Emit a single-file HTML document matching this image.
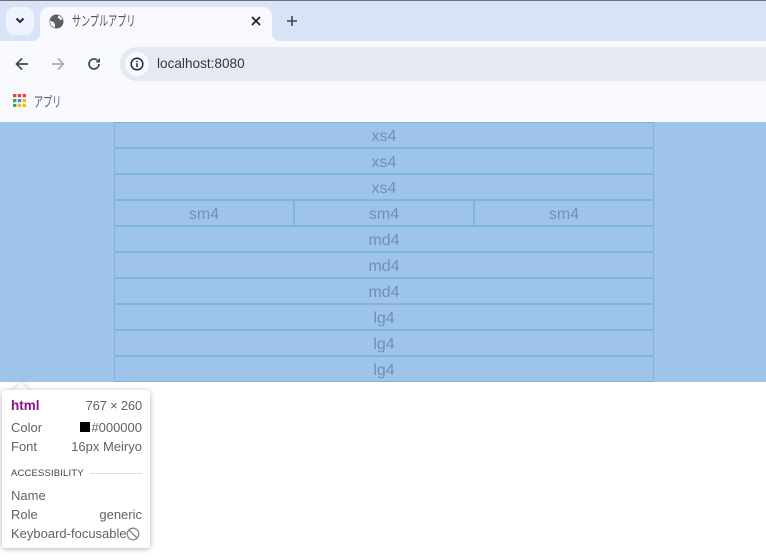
<!DOCTYPE html>
<html><head><meta charset="utf-8"><style>
*{box-sizing:border-box}
html,body{margin:0;padding:0;width:766px;height:560px;overflow:hidden;background:#fff;font-family:"Liberation Sans","Noto Sans CJK JP",sans-serif}
.a{position:absolute}
#top{left:0;top:0;width:766px;height:1px;background:#6f6f6f}
#tabs{left:0;top:1px;width:766px;height:40px;background:#d8e3f7}
#bar{left:0;top:41px;width:766px;height:81px;background:#f8f9ff}
#page{left:0;top:122px;width:766px;height:260px;background:#9fc4e9}
.c{position:absolute;border:1px solid #7fb3e0;height:26px;text-align:center;font-size:16px;line-height:27px;color:#6e8fb8;background:#9fc4e9}
#tip{left:2px;top:390px;width:148px;height:158px;background:#fff;border-radius:3px;box-shadow:0 1px 6px rgba(0,0,0,.3)}
.t{position:absolute;font-size:13px;line-height:16px;color:#626262;white-space:nowrap}
.r{right:8px}.l{left:9px}
.jp{font-size:14px;line-height:16px;white-space:nowrap;transform:scaleX(.65);transform-origin:0 0}
</style></head><body>
<div class="a" id="top"></div>
<div class="a" id="tabs"></div>
<div class="a" id="bar"></div>
<div class="a" style="left:6px;top:7px;width:28px;height:28px;border-radius:9px;background:#eef3fd"></div>
<svg class="a" style="left:15px;top:17px" width="10" height="8" viewBox="0 0 10 8"><path d="M1.5 1.5L5 5L8.5 1.5" fill="none" stroke="#202a3a" stroke-width="2"/></svg>
<div class="a" style="left:40px;top:7px;width:232px;height:34px;background:#f8f9ff;border-radius:9px 9px 0 0"></div>
<svg class="a" style="left:32px;top:33px" width="8" height="8"><path d="M8 0V8H0A8 8 0 0 0 8 0Z" fill="#f8f9ff"/></svg>
<svg class="a" style="left:272px;top:33px" width="8" height="8"><path d="M0 0V8H8A8 8 0 0 1 0 0Z" fill="#f8f9ff"/></svg>
<svg class="a" style="left:49px;top:14px" width="15" height="15" viewBox="0 0 15 15"><circle cx="7.5" cy="7.5" r="7" fill="#5a5f66"/><path d="M1.2 6.5L5 8.5L6 10.5L6 13.6A6.3 6.3 0 0 1 1.2 6.5ZM9.5 1.5A6.3 6.3 0 0 1 13.6 5.5L11 6L10.5 4.5L8.5 4Z" fill="#f8f9ff"/></svg>
<div class="a jp" style="left:72px;top:13px;color:#50545a">サンプルアプリ</div>
<svg class="a" style="left:251px;top:16px" width="10" height="10" viewBox="0 0 10 10"><path d="M1 1L9 9M9 1L1 9" stroke="#20242a" stroke-width="1.8"/></svg>
<svg class="a" style="left:286px;top:15px" width="12" height="12" viewBox="0 0 12 12"><path d="M6 1V11M1 6H11" stroke="#3c4654" stroke-width="1.6"/></svg>

<svg class="a" style="left:15px;top:57px" width="14" height="14" viewBox="0 0 14 14"><path d="M13 7H2M7 1.5L1.5 7L7 12.5" fill="none" stroke="#3c4654" stroke-width="1.7"/></svg>
<svg class="a" style="left:51px;top:57px" width="14" height="14" viewBox="0 0 14 14"><path d="M1 7H12M7 1.5L12.5 7L7 12.5" fill="none" stroke="#a9adb4" stroke-width="1.7"/></svg>
<svg class="a" style="left:87px;top:57px" width="14" height="14" viewBox="0 0 14 14"><path d="M12 7A5 5 0 1 1 10.3 3.2" fill="none" stroke="#3c4654" stroke-width="1.7"/><path d="M8.5 5.5H13V1Z" fill="#3c4654"/></svg>
<div class="a" style="left:120px;top:47px;width:660px;height:34px;border-radius:17px;background:#e5e9f2"></div>
<div class="a" style="left:125px;top:52px;width:24px;height:24px;border-radius:12px;background:#f8f9ff"></div>
<svg class="a" style="left:130px;top:57px" width="14" height="14" viewBox="0 0 14 14"><circle cx="7" cy="7" r="5.8" fill="none" stroke="#23272e" stroke-width="1.5"/><path d="M7 6.2V10.2M7 3.8V5.3" stroke="#23272e" stroke-width="1.5"/></svg>
<div class="a" style="left:157px;top:56px;font-size:13.6px;line-height:16px;color:#2f3845;white-space:nowrap">localhost:8080</div>

<svg class="a" style="left:13px;top:94px" width="13" height="13"><rect x="0" y="0" width="3.4" height="3.2" fill="#ea4335"/><rect x="4.8" y="0" width="3.4" height="3.2" fill="#ea4335"/><rect x="9.6" y="0" width="3.4" height="3.2" fill="#ea4335"/><rect x="0" y="5" width="3.4" height="3.2" fill="#34a853"/><rect x="4.8" y="5" width="3.4" height="3.2" fill="#4285f4"/><rect x="9.6" y="5" width="3.4" height="3.2" fill="#fbbc04"/><rect x="0" y="9.8" width="3.4" height="3.2" fill="#34a853"/><rect x="4.8" y="9.8" width="3.4" height="3.2" fill="#fbbc04"/><rect x="9.6" y="9.8" width="3.4" height="3.2" fill="#fbbc04"/></svg>
<div class="a jp" style="left:34px;top:94px;color:#50607a">アプリ</div>

<div class="a" id="page"></div>
<div class="c" style="left:114px;top:122px;width:540px">xs4</div>
<div class="c" style="left:114px;top:148px;width:540px">xs4</div>
<div class="c" style="left:114px;top:174px;width:540px">xs4</div>
<div class="c" style="left:114px;top:200px;width:180px">sm4</div>
<div class="c" style="left:294px;top:200px;width:180px">sm4</div>
<div class="c" style="left:474px;top:200px;width:180px">sm4</div>
<div class="c" style="left:114px;top:226px;width:540px">md4</div>
<div class="c" style="left:114px;top:252px;width:540px">md4</div>
<div class="c" style="left:114px;top:278px;width:540px">md4</div>
<div class="c" style="left:114px;top:304px;width:540px">lg4</div>
<div class="c" style="left:114px;top:330px;width:540px">lg4</div>
<div class="c" style="left:114px;top:356px;width:540px">lg4</div>

<svg class="a" style="left:11px;top:382px;filter:drop-shadow(0 0 2px rgba(0,0,0,.25))" width="20" height="9"><path d="M1 9L10 1L19 9Z" fill="#fff"/></svg>
<div class="a" id="tip">
<div class="t l" style="top:8px;font-weight:bold;font-size:13.5px;color:#881280">html</div>
<div class="t r" style="top:8px;letter-spacing:-.2px">767 × 260</div>
<div class="t l" style="top:30px">Color</div>
<div class="t r" style="top:30px">#000000</div>
<div class="a" style="left:78px;top:32px;width:10px;height:10px;background:#000"></div>
<div class="t l" style="top:49px">Font</div>
<div class="t r" style="top:49px">16px Meiryo</div>
<div class="t l" style="top:76px;font-size:9.5px;letter-spacing:.15px;color:#444">ACCESSIBILITY</div>
<div class="a" style="left:88px;top:83px;width:52px;height:1px;background:#dcdcdc"></div>
<div class="t l" style="top:98px">Name</div>
<div class="t l" style="top:117px">Role</div>
<div class="t r" style="top:117px">generic</div>
<div class="t l" style="top:136px">Keyboard-focusable</div>
<svg class="a" style="left:124px;top:137px" width="14" height="14" viewBox="0 0 14 14"><circle cx="7" cy="7" r="5.8" fill="none" stroke="#888" stroke-width="1.3"/><path d="M3 3L11 11" stroke="#888" stroke-width="1.3"/></svg>
</div>
</body></html>
